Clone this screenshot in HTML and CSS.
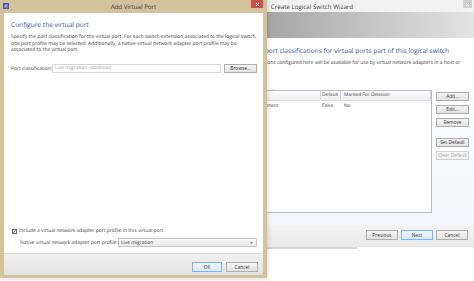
FILE: index.html
```html
<!DOCTYPE html>
<html lang="en">
<head>
  <meta charset="UTF-8" />
  <meta name="viewport" content="width=device-width, initial-scale=1.0"/>
  <title>Add Virtual Port</title>
  <link rel="stylesheet" href="styles.css">
</head>
<body>
  <div class="desktop">

    <div class="wizard">
      <div class="wizard-title">
        <span>Create Logical Switch Wizard</span>
        <span class="wizard-close">
          <svg width="5" height="5" viewBox="0 0 5 5"><path d="M1 1L4 4M4 1L1 4" stroke="#fff" stroke-width="0.9"/></svg>
        </span>
      </div>
      <div class="wizard-banner"></div>
      <div class="wizard-body">
        <div class="wizard-nav"></div>
        <div class="wizard-main">
          <h2>Configure port classifications for virtual ports part of this logical switch</h2>
          <p>Port classifications configured here will be available for use by virtual network adapters in a host or</p>
          <div class="port-area">
            <div class="port-list">
              <div class="list-head">
                <div class="col-name">Classification<span class="sort-mark">&#710;</span></div>
                <div class="col-default">Default</div>
                <div class="col-deleted">Marked For Deletion</div>
              </div>
              <div class="list-row">
                <div class="col-name">Host management</div>
                <div class="col-default">False</div>
                <div class="col-deleted">No</div>
              </div>
            </div>
            <div class="list-buttons">
              <button>Add...</button>
              <button>Edit...</button>
              <button>Remove</button>
              <button class="group-start">Set Default</button>
              <button disabled>Clear Default</button>
            </div>
          </div>
        </div>
      </div>
      <div class="wizard-footer">
        <button>Previous</button>
        <button class="default">Next</button>
        <button>Cancel</button>
      </div>
    </div>

    <div class="scroll-strip"></div>

    <div class="dialog">
      <div class="dialog-title">
        <svg class="dialog-icon" width="6" height="6" viewBox="0 0 6 6">
          <rect x="0" y="0" width="6" height="6" fill="#4a57a6"/>
          <rect x="1.5" y="1.5" width="3" height="3" fill="#9fa8dd"/>
        </svg>
        <span>Add Virtual Port</span>
        <span class="dialog-close">
          <svg width="5" height="5" viewBox="0 0 5 5"><path d="M1 1L4 4M4 1L1 4" stroke="#fff" stroke-width="1"/></svg>
        </span>
      </div>
      <div class="dialog-frame">
        <div class="dialog-content">
          <h1>Configure the virtual port</h1>
          <p class="intro">Specify the port classification for the virtual port. For each switch extension associated to the logical switch,<br>one port profile may be selected. Additionally, a native virtual network adapter port profile may be<br>associated to the virtual port.</p>
          <div class="field-row">
            <label>Port classification:</label>
            <div class="text-input">Live migration -workload</div>
            <button class="browse">Browse...</button>
          </div>
          <div class="spacer"></div>
          <div class="check-row">
            <span class="checkbox">
              <svg width="5" height="5" viewBox="0 0 5 5"><path d="M0.9 2.6L2 3.7L4.2 1" fill="none" stroke="#222" stroke-width="0.8"/></svg>
            </span>
            <span>Include a virtual network adapter port profile in this virtual port</span>
          </div>
          <div class="native-row">
            <label>Native virtual network adapter port profile:</label>
            <div class="select">
              <span>Live migration</span>
              <svg width="3" height="2" viewBox="0 0 3 2"><path d="M0 0H3L1.5 2Z" fill="#888"/></svg>
            </div>
          </div>
        </div>
        <div class="dialog-footer">
          <button class="default ok">OK</button>
          <button class="cancel">Cancel</button>
        </div>
      </div>
    </div>

  </div>
</body>
</html>
```

FILE: styles.css
```css
* {
  box-sizing: border-box;
}

body {
  margin: 0;
  background: #ffffff;
  font-family: "Open Sans", "Noto Sans", sans-serif;
  color: #3c3c3c;
  text-rendering: geometricPrecision;
}

.desktop {
  position: relative;
  width: 474px;
  height: 281px;
  overflow: hidden;
}

button {
  font-family: inherit;
  font-size: 4.8px;
  color: #333;
  background: linear-gradient(#f4f4f4, #e3e3e3);
  border: 1px solid #adadad;
  padding: 0;
  height: 9px;
  line-height: 7px;
}

button.default {
  border-color: #7eb4ea;
  background: linear-gradient(#eef5fc, #dce8f5);
}

button:disabled {
  color: #a8a8a8;
  border-color: #d0d0d0;
  background: #f5f5f5;
}

/* wizard behind */

.wizard {
  position: absolute;
  left: 150px;
  top: 0;
  width: 324px;
  height: 247px;
  display: flex;
  flex-direction: column;
  background: #f6f8fb;
}

.wizard-title {
  position: relative;
  height: 12px;
  display: flex;
  align-items: center;
  justify-content: center;
  background: #f2f2f2;
  font-size: 6.2px;
  color: #444;
}

.wizard-close {
  position: absolute;
  right: 2px;
  top: 0;
  width: 9px;
  height: 8px;
  background: #cfcfcf;
  display: flex;
  align-items: center;
  justify-content: center;
}

.wizard-banner {
  height: 26px;
  background: linear-gradient(to right, #8c8c8c, #a6a6a6 36%, #e3e3e3);
}

.wizard-body {
  flex: 1;
  display: flex;
}

.wizard-nav {
  width: 80px;
  background: #eef1f5;
}

.wizard-main {
  flex: 1;
  padding-top: 9px;
  background: linear-gradient(#ffffff 30%, #f3f6fa);
}

.wizard-main h2 {
  margin: 0;
  padding-left: 3px;
  font-size: 6.6px;
  line-height: 7px;
  font-weight: normal;
  color: #2f4f9f;
  white-space: nowrap;
}

.wizard-main p {
  margin: 6px 0 0;
  padding-left: 3px;
  font-size: 4.95px;
  line-height: 6px;
  white-space: nowrap;
}

.port-area {
  display: flex;
  gap: 4px;
  margin-top: 24px;
  padding-left: 4px;
}

.port-list {
  width: 198px;
  height: 123px;
  border: 1px solid #b4bdca;
  background: #fff;
}

.list-head,
.list-row {
  display: grid;
  grid-template-columns: 86px 20px 1fr;
  font-size: 4.8px;
  white-space: nowrap;
}

.list-head {
  height: 10px;
  background: linear-gradient(#ffffff, #ececec);
  border-bottom: 1px solid #dcdcdc;
}

.list-head div {
  line-height: 9px;
  border-right: 1px solid #d6d6d6;
}

.list-head .col-name {
  position: relative;
}

.sort-mark {
  position: absolute;
  left: 37px;
  top: -3px;
  font-size: 5px;
  color: #777;
}

.list-row {
  height: 9px;
  line-height: 9px;
  margin-top: 1px;
}

.col-name {
  padding-left: 2px;
}

.col-default {
  padding-left: 1px;
}

.col-deleted {
  padding-left: 3px;
}

.list-buttons {
  width: 33px;
  display: flex;
  flex-direction: column;
  gap: 4px;
  padding-top: 2px;
}

.list-buttons .group-start {
  margin-top: 7px;
}

.wizard-footer {
  height: 22px;
  display: flex;
  justify-content: flex-end;
  gap: 3px;
  padding: 5px 6px 0 0;
  background: linear-gradient(#f3f3f3, #e8e8e8);
}

.wizard-footer button {
  width: 32px;
  height: 10px;
}

.scroll-strip {
  position: absolute;
  left: 267px;
  top: 247px;
  width: 90px;
  height: 2px;
  background: #d6d6d6;
}

/* dialog on top */

.dialog {
  position: absolute;
  left: 0;
  top: 0;
  width: 267px;
  height: 278px;
  background: #d3c39c;
  display: flex;
  flex-direction: column;
  box-shadow: 0 0 5px rgba(0, 0, 0, 0.2);
}

.dialog-title {
  position: relative;
  height: 13px;
  display: flex;
  align-items: center;
  justify-content: center;
  font-size: 6.2px;
  color: #333;
}

.dialog-icon {
  position: absolute;
  left: 3px;
  top: 3px;
}

.dialog-close {
  position: absolute;
  right: 4px;
  top: 0;
  width: 12px;
  height: 8px;
  background: #c7504a;
  display: flex;
  align-items: center;
  justify-content: center;
}

.dialog-frame {
  flex: 1;
  margin: 0 4px 3px;
  display: flex;
  flex-direction: column;
}

.dialog-content {
  flex: 1;
  background: #fff;
  padding: 8px 6px 6px 7px;
  display: flex;
  flex-direction: column;
  font-size: 4.9px;
}

.dialog-content h1 {
  margin: 0;
  font-size: 6.6px;
  line-height: 8px;
  font-weight: normal;
  color: #2f4f9f;
}

.intro {
  margin: 5px 0 0;
  font-size: 4.95px;
  line-height: 6.5px;
  white-space: nowrap;
}

.field-row {
  display: flex;
  align-items: center;
  height: 9px;
  margin-top: 10.5px;
}

.field-row label {
  width: 41px;
  white-space: nowrap;
}

.text-input {
  flex: 1;
  height: 9px;
  border: 1px solid #d6d6d6;
  color: #a0a0a0;
  padding-left: 2px;
  line-height: 7px;
}

.browse {
  width: 33px;
  margin-left: 3px;
}

.spacer {
  flex: 1;
}

.check-row {
  display: flex;
  align-items: center;
  gap: 2px;
  height: 6px;
  padding-left: 1px;
}

.checkbox {
  width: 5px;
  height: 5px;
  border: 0.6px solid #666;
  background: #fff;
  display: flex;
}

.checkbox svg {
  margin: -0.6px;
}

.native-row {
  display: flex;
  align-items: center;
  height: 9px;
  margin-top: 4px;
  padding-left: 9px;
  white-space: nowrap;
}

.select {
  margin-left: auto;
  width: 139px;
  height: 9px;
  border: 1px solid #c6c6c6;
  background: linear-gradient(#f7f7f7, #e8e8e8);
  display: flex;
  align-items: center;
  justify-content: space-between;
  padding: 0 3px 0 2px;
}

.dialog-footer {
  height: 22px;
  border-top: 1px solid #d9d9d9;
  background: linear-gradient(#f1f1f1, #e2e2e2);
  display: flex;
  justify-content: flex-end;
  gap: 4px;
  padding: 8px 5px 0 0;
}

.dialog-footer button {
  height: 10px;
}

.dialog-footer .ok {
  width: 30px;
}

.dialog-footer .cancel {
  width: 32px;
}
```
